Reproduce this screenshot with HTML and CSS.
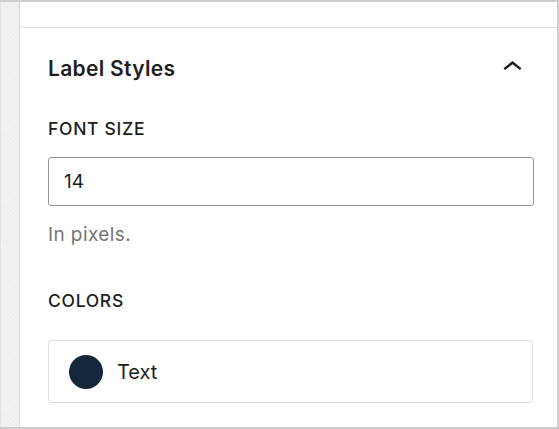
FILE: index.html
```html
<!DOCTYPE html>
<html lang="en">
<head>
<meta charset="utf-8">
<title>Label Styles</title>
<link rel="stylesheet" href="styles.css">
</head>
<body>
<div class="frame">
  <div class="gutter"></div>
  <div class="panel">
    <div class="top-strip"></div>
    <div class="section">
      <div class="section-header">
        <h2 class="section-title">Label Styles</h2>
        <svg class="chevron" viewBox="0 0 24 24" width="39" height="39" aria-hidden="true">
          <path d="M6.5 12.4L12 8l5.5 4.4-.9 1.2L12 10l-4.6 3.6-1-1.2z" fill="#1e1e1e"/>
        </svg>
      </div>
      <div class="field-label">Font size</div>
      <div class="text-input">14</div>
      <p class="help">In pixels.</p>
      <div class="field-label colors-label">Colors</div>
      <div class="color-item">
        <span class="swatch"></span>
        <span class="color-name">Text</span>
      </div>
    </div>
  </div>
</div>
</body>
</html>
```

FILE: styles.css
```css
* { box-sizing: border-box; }

html, body {
  margin: 0;
  padding: 0;
  background: #ffffff;
}

body {
  font-family: Inter, "Noto Sans", "Liberation Sans", sans-serif;
  color: #1e1e1e;
}

.frame {
  width: 559px;
  height: 429px;
  display: flex;
  border-top: 2px solid #cdcdcd;
  border-right: 2px solid #cdcdcd;
  border-bottom: 2px solid #cdcdcd;
  overflow: hidden;
}

.gutter {
  width: 20px;
  flex: none;
  background-color: #f2f2f2;
  background-image: repeating-linear-gradient(45deg, rgba(0,0,0,0.018) 0 1px, transparent 1px 3px);
  border-left: 1px solid #e2e2e2;
  border-right: 1px solid #d6d6d6;
}

.panel {
  flex: 1;
  display: flex;
  flex-direction: column;
}

.top-strip {
  height: 26px;
  border-bottom: 1px solid #e0e0e0;
  flex: none;
}

.section {
  padding: 0 23px 0 28px;
  display: flex;
  flex-direction: column;
}

.section-header {
  height: 82px;
  display: flex;
  align-items: center;
  justify-content: space-between;
}

.section-title {
  margin: 0;
  font-size: 21px;
  font-weight: 600;
  line-height: 28px;
  letter-spacing: 0.3px;
}

.chevron {
  display: block;
  margin-right: 2px;
  margin-bottom: 3px;
}

.field-label {
  margin-top: 9px;
  font-size: 17.5px;
  font-weight: 500;
  line-height: 20px;
  text-transform: uppercase;
  letter-spacing: 0.7px;
}

.text-input {
  margin-top: 18px;
  height: 49px;
  border: 1.5px solid #949494;
  border-radius: 3px;
  padding-left: 15px;
  display: flex;
  align-items: center;
  font-size: 19px;
}

.help {
  margin: 18px 0 0;
  font-size: 19px;
  line-height: 22px;
  color: #757575;
  letter-spacing: 0.4px;
}

.colors-label {
  margin-top: 45px;
}

.color-item {
  margin-top: 29px;
  height: 63px;
  border: 1px solid #e0e0e0;
  border-radius: 3px;
  display: flex;
  align-items: center;
  gap: 14px;
  padding-left: 20px;
  margin-right: 1px;
}

.swatch {
  width: 34px;
  height: 34px;
  border-radius: 50%;
  background: #13263b;
  flex: none;
}

.color-name {
  font-size: 20px;
}
```
